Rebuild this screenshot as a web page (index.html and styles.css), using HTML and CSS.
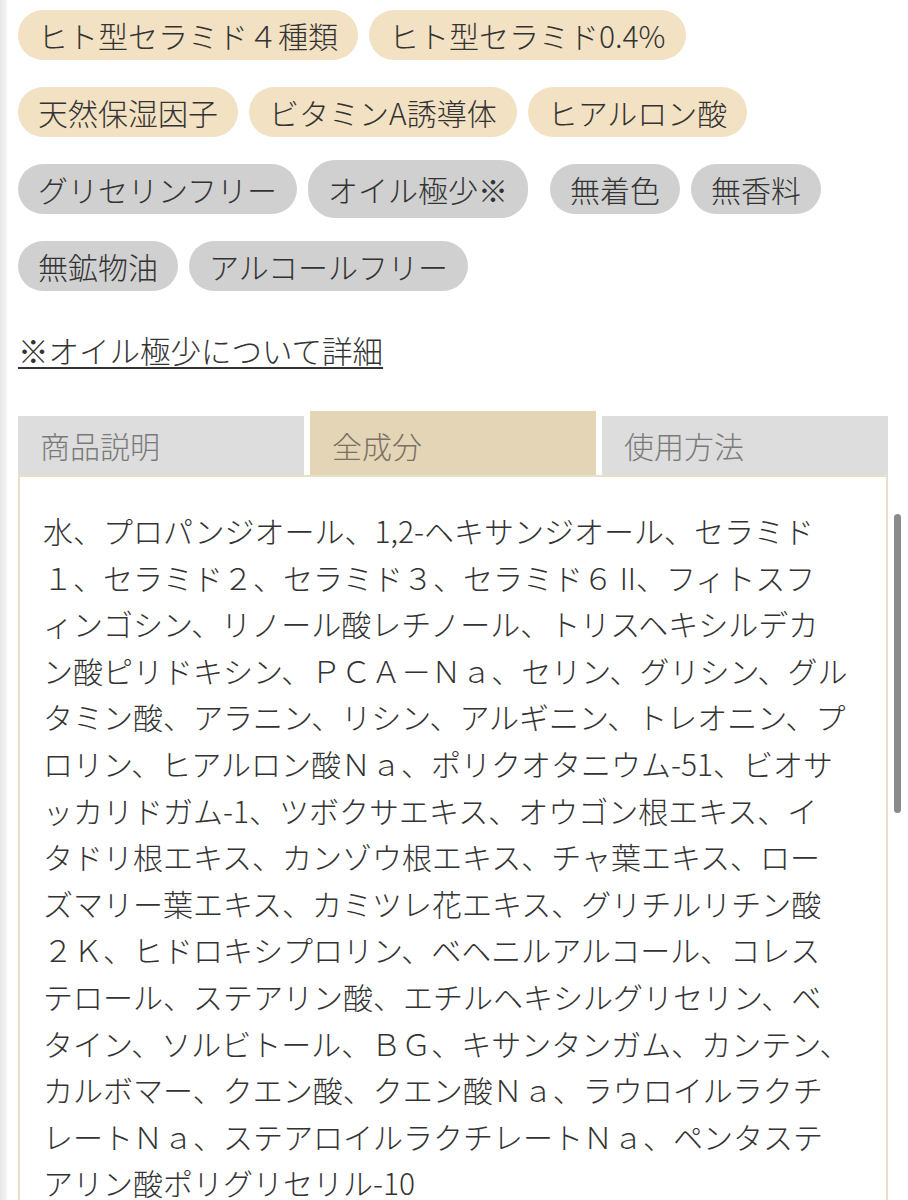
FILE: index.html
```html
<!DOCTYPE html>
<html lang="ja">
<head>
    <meta charset="UTF-8">
    <meta name="viewport" content="width=device-width, initial-scale=1.0">
    <title>全成分</title>
    <link rel="stylesheet" href="styles.css">
</head>
<body>
    <ul class="tags">
        <li class="tag key">ヒト型セラミド４種類</li>
        <li class="tag key">ヒト型セラミド0.4%</li>
        <li class="tag key">天然保湿因子</li>
        <li class="tag key">ビタミンA誘導体</li>
        <li class="tag key">ヒアルロン酸</li>
        <li class="tag free">グリセリンフリー</li>
        <li class="tag free oil">オイル極少※</li>
        <li class="tag free">無着色</li>
        <li class="tag free">無香料</li>
        <li class="tag free">無鉱物油</li>
        <li class="tag free">アルコールフリー</li>
    </ul>

    <p class="note"><a href="#">※オイル極少について詳細</a></p>

    <div class="panel">
        <div class="tabs">
            <div class="tab">商品説明</div>
            <div class="tab active">全成分</div>
            <div class="tab">使用方法</div>
        </div>
        <div class="tab-body">
            <p class="ingredients">水、プロパンジオール、1,2-ヘキサンジオール、セラミド<br>１、セラミド２、セラミド３、セラミド６ II、フィトスフ<br>ィンゴシン、リノール酸レチノール、トリスヘキシルデカ<br>ン酸ピリドキシン、ＰＣＡ－Ｎａ、セリン、グリシン、グル<br>タミン酸、アラニン、リシン、アルギニン、トレオニン、プ<br>ロリン、ヒアルロン酸Ｎａ、ポリクオタニウム-51、ビオサ<br>ッカリドガム-1、ツボクサエキス、オウゴン根エキス、イ<br>タドリ根エキス、カンゾウ根エキス、チャ葉エキス、ロー<br>ズマリー葉エキス、カミツレ花エキス、グリチルリチン酸<br>２Ｋ、ヒドロキシプロリン、ベヘニルアルコール、コレス<br>テロール、ステアリン酸、エチルヘキシルグリセリン、ベ<br>タイン、ソルビトール、ＢＧ、キサンタンガム、カンテン、<br>カルボマー、クエン酸、クエン酸Ｎａ、ラウロイルラクチ<br>レートＮａ、ステアロイルラクチレートＮａ、ペンタステ<br>アリン酸ポリグリセリル-10</p>
        </div>
        <div class="scroll-thumb"></div>
    </div>
</body>
</html>
```

FILE: styles.css
```css
html, body {
    height: 100%;
    overflow: hidden;
}
body {
    margin: 0;
    padding: 10px 20px 0 18px;
    font-family: "Noto Sans CJK JP", "Noto Sans", sans-serif;
    font-weight: 300;
    color: #333;
    background: linear-gradient(to right, #e6e6e6 0, #f3f3f3 6px, #fff 8px) no-repeat;
    background-color: #fff;
}
.tags {
    list-style: none;
    margin: 0;
    padding: 0;
    display: flex;
    flex-wrap: wrap;
    row-gap: 27px;
    column-gap: 11px;
}
.tag {
    height: 50px;
    line-height: 50px;
    padding: 0 20px;
    border-radius: 25px;
    font-size: 30px;
    white-space: nowrap;
}
.key {
    background-color: #f2e1c2;
}
.free {
    background-color: #d0d0d0;
}
.oil {
    height: 58px;
    line-height: 58px;
    margin: -4px 11px -4px 0;
    border-radius: 27px;
}
.note {
    margin: 39px 0 0;
    font-size: 30.5px;
    line-height: 40px;
}
.note a {
    color: #333;
    text-decoration: underline;
    text-decoration-thickness: 2px;
    text-underline-offset: 4px;
}
.panel {
    position: relative;
    margin-top: 41px;
}
.tabs {
    display: grid;
    grid-template-columns: repeat(3, 1fr);
    gap: 6px;
    align-items: end;
}
.tab {
    height: 59px;
    line-height: 59px;
    padding: 0 22px;
    background-color: #dddddd;
    color: #7a7a7a;
    font-size: 30px;
}
.tab.active {
    box-sizing: border-box;
    height: 64px;
    padding-top: 5px;
    background-color: #e3d5b6;
    color: #787166;
}
.tab-body {
    height: 900px;
    border: 2px solid #e8dfca;
    background: #fff;
}
.ingredients {
    margin: 0;
    padding: 30px 0 0 23px;
    font-size: 30px;
    line-height: 46.6px;
    color: #333;
}
.scroll-thumb {
    position: absolute;
    top: 103px;
    right: -13px;
    width: 7px;
    height: 299px;
    border-radius: 4px;
    background-color: #8a8a8a;
}
```
